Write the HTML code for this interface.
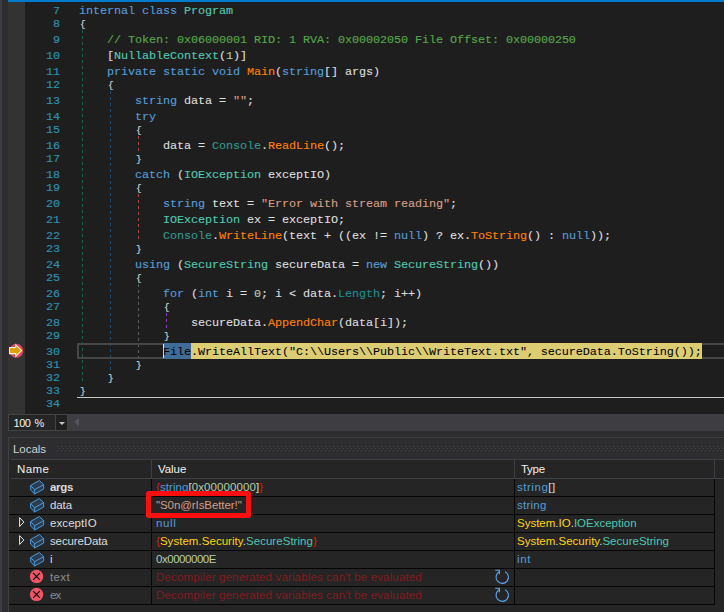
<!DOCTYPE html>
<html><head><meta charset="utf-8"><title>Locals</title>
<style>
html,body{margin:0;padding:0;background:#2d2d30;}
body{width:724px;height:612px;position:relative;overflow:hidden;font-family:"Liberation Sans",sans-serif;}
#strip{position:absolute;left:0;top:0;width:2px;height:612px;background:#3e3e42}
#ed{position:absolute;left:8px;top:0;width:716px;height:414px;background:#1e1e1e;overflow:hidden}
#topbar{position:absolute;left:8px;top:0;width:716px;height:2px;background:#007acc}
#gut{position:absolute;left:8px;top:2px;width:17px;height:412px;background:#333333}
.cl,.ln{position:absolute;height:16px;line-height:16px;font-family:"Liberation Mono",monospace;font-size:11.8px;letter-spacing:-0.0812px;white-space:pre;color:#dcdcdc}
.cl{left:79px;padding-top:1px;-webkit-text-stroke:0.14px}
.br{font-size:9.3px;position:relative;top:-0.3px;margin-left:0.9px;letter-spacing:0}
.ln{left:25px;width:35px;text-align:right;color:#2b91af;padding-top:1px;-webkit-text-stroke:0.18px}
.curbox{position:absolute;left:77px;width:649px;height:16px;box-sizing:border-box;border:2px solid #464646}
.hl{position:absolute;left:163px;width:539px;height:15.7px;background:#dccc72}
.sel{position:absolute;left:163px;width:28px;height:16px;background:#3f6c98}
.caret{position:absolute;left:163px;width:1px;height:14px;background:#e0e0e0}
.guide{position:absolute;width:1px}
#endline{position:absolute;left:77px;top:397px;width:647px;height:1px;background:#c8c8c8}
#hs{position:absolute;left:8px;top:414px;width:716px;height:17px;background:#3e3e42}
#zoom{position:absolute;left:8px;top:414px;width:48px;height:17px;box-sizing:border-box;border:1px solid #434346;background:#252526;color:#f1f1f1;font-size:11px;line-height:17px;padding-left:4.6px;letter-spacing:-0.5px;word-spacing:1.6px;white-space:pre}
#zbtn{position:absolute;left:55px;top:414px;width:13px;height:17px;box-sizing:border-box;border:1px solid #434346;background:#202021}
#zbtn:after{content:"";position:absolute;left:3px;top:7px;border:3px solid transparent;border-top:3px solid #c8c8c8;border-bottom:none}
#larrow{position:absolute;left:74px;top:418px;width:0;height:0;border:4.5px solid transparent;border-right:5px solid #56565a;border-left:none}
#panel{position:absolute;left:8px;top:437px;width:717px;height:180px;box-sizing:border-box;border:1px solid #3f3f46;background:#2d2d30}
#pbody{position:absolute;left:9px;top:459px;width:715px;height:153px;background:#252526}
#ptitle{position:absolute;left:13px;top:440.5px;font-size:11.5px;line-height:16px;color:#d0d0d0;letter-spacing:-0.04px}
#grip{position:absolute;left:57px;top:446px}
#hdr{position:absolute;left:11px;top:459px;width:713px;height:20px;box-sizing:border-box;border-top:1px solid #3f3f46;border-bottom:1px solid #3f3f46;background:#252526;color:#f1f1f1;font-size:11.5px;line-height:18px}
#hdr div{position:absolute;top:0;height:18px;padding-left:6px;border-left:1px solid #3f3f46;box-sizing:border-box;white-space:pre}
.row{position:absolute;left:9px;width:706px;height:18px;box-sizing:border-box;border-bottom:1px solid #050505;border-right:1px solid #050505;font-size:11.5px;line-height:16px;color:#dcdcdc;background:#252526}
.row .c1,.row .c2,.row .c3{position:absolute;top:0;height:17px;white-space:pre;overflow:hidden}
.row .c1{left:41px;width:100px}
.row .c2{left:142px;width:363px;border-left:1px solid #050505;padding-left:4px;box-sizing:border-box}
.row .c3{left:505px;width:200px;border-left:1px solid #050505;padding-left:2px;box-sizing:border-box}
.row .ico{position:absolute;left:20px;top:0px}
.row .exp{position:absolute;left:8.7px;top:0px}
.row .rf{position:absolute;left:485px;top:0px}
#red{position:absolute;left:146px;top:491px;width:105px;height:27px;box-sizing:border-box;border:5px solid #fe0e0e;border-radius:2.5px}
</style></head><body>
<div id="strip"></div>
<div id="ed"></div>
<div id="topbar"></div>
<div id="gut"></div>
<div id="endline"></div>
<div class="guide" style="left:82px;top:30px;height:354px;background:repeating-linear-gradient(to bottom,#186350 0,#186350 3px,transparent 3px,transparent 6px)"></div>
<div class="guide" style="left:110px;top:91px;height:280px;background:repeating-linear-gradient(to bottom,#1b4c73 0,#1b4c73 3px,transparent 3px,transparent 6px)"></div>
<div class="guide" style="left:138px;top:136px;height:16px;background:repeating-linear-gradient(to bottom,#a94b44 0,#a94b44 3px,transparent 3px,transparent 6px)"></div>
<div class="guide" style="left:138px;top:194px;height:48px;background:repeating-linear-gradient(to bottom,#a94b44 0,#a94b44 3px,transparent 3px,transparent 6px)"></div>
<div class="guide" style="left:138px;top:284px;height:74px;background:repeating-linear-gradient(to bottom,#5e5e5e 0,#5e5e5e 3px,transparent 3px,transparent 6px)"></div>
<div class="guide" style="left:166px;top:313px;height:16px;background:repeating-linear-gradient(to bottom,#8a3fc0 0,#8a3fc0 3px,transparent 3px,transparent 6px)"></div>
<div class="ln" style="top:2px">7</div>
<div class="cl" style="top:2px"><span style="color:#569cd6">internal</span> <span style="color:#569cd6">class</span> <span style="color:#4ec9b0">Program</span></div>
<div class="ln" style="top:15px">8</div>
<div class="cl" style="top:15px"><span class="br">{</span></div>
<div class="ln" style="top:31px">9</div>
<div class="cl" style="top:31px">    <span style="color:#57a64a">// Token: 0x06000001 RID: 1 RVA: 0x00002050 File Offset: 0x00000250</span></div>
<div class="ln" style="top:47px">10</div>
<div class="cl" style="top:47px">    [<span style="color:#4ec9b0">NullableContext</span>(<span style="color:#b5cea8">1</span>)]</div>
<div class="ln" style="top:63px">11</div>
<div class="cl" style="top:63px">    <span style="color:#569cd6">private</span> <span style="color:#569cd6">static</span> <span style="color:#569cd6">void</span> <span style="color:#ff8000">Main</span>(<span style="color:#569cd6">string</span>[] args)</div>
<div class="ln" style="top:76px">12</div>
<div class="cl" style="top:76px">    <span class="br">{</span></div>
<div class="ln" style="top:92px">13</div>
<div class="cl" style="top:92px">        <span style="color:#569cd6">string</span> data = <span style="color:#d69d85">&quot;&quot;</span>;</div>
<div class="ln" style="top:108px">14</div>
<div class="cl" style="top:108px">        <span style="color:#569cd6">try</span></div>
<div class="ln" style="top:121px">15</div>
<div class="cl" style="top:121px">        <span class="br">{</span></div>
<div class="ln" style="top:137px">16</div>
<div class="cl" style="top:137px">            data = <span style="color:#2f9a8a">Console</span>.<span style="color:#ff8000">ReadLine</span>();</div>
<div class="ln" style="top:150px">17</div>
<div class="cl" style="top:150px">        <span class="br">}</span></div>
<div class="ln" style="top:166px">18</div>
<div class="cl" style="top:166px">        <span style="color:#569cd6">catch</span> (<span style="color:#4ec9b0">IOException</span> exceptIO)</div>
<div class="ln" style="top:179px">19</div>
<div class="cl" style="top:179px">        <span class="br">{</span></div>
<div class="ln" style="top:195px">20</div>
<div class="cl" style="top:195px">            <span style="color:#569cd6">string</span> text = <span style="color:#d69d85">&quot;Error with stream reading&quot;</span>;</div>
<div class="ln" style="top:211px">21</div>
<div class="cl" style="top:211px">            <span style="color:#4ec9b0">IOException</span> ex = exceptIO;</div>
<div class="ln" style="top:227px">22</div>
<div class="cl" style="top:227px">            <span style="color:#2f9a8a">Console</span>.<span style="color:#ff8000">WriteLine</span>(text + ((ex != <span style="color:#569cd6">null</span>) ? ex.<span style="color:#ff8000">ToString</span>() : <span style="color:#569cd6">null</span>));</div>
<div class="ln" style="top:240px">23</div>
<div class="cl" style="top:240px">        <span class="br">}</span></div>
<div class="ln" style="top:256px">24</div>
<div class="cl" style="top:256px">        <span style="color:#569cd6">using</span> (<span style="color:#4ec9b0">SecureString</span> secureData = <span style="color:#569cd6">new</span> <span style="color:#4ec9b0">SecureString</span>())</div>
<div class="ln" style="top:269px">25</div>
<div class="cl" style="top:269px">        <span class="br">{</span></div>
<div class="ln" style="top:285px">26</div>
<div class="cl" style="top:285px">            <span style="color:#569cd6">for</span> (<span style="color:#569cd6">int</span> i = <span style="color:#b5cea8">0</span>; i &lt; data.<span style="color:#178f8f">Length</span>; i++)</div>
<div class="ln" style="top:298px">27</div>
<div class="cl" style="top:298px">            <span class="br">{</span></div>
<div class="ln" style="top:314px">28</div>
<div class="cl" style="top:314px">                secureData.<span style="color:#ff8000">AppendChar</span>(data[i]);</div>
<div class="ln" style="top:327px">29</div>
<div class="cl" style="top:327px">            <span class="br">}</span></div>
<div class="ln" style="top:343px">30</div>
<div class="curbox" style="top:343px"></div>
<div class="hl" style="top:343px"></div>
<div class="sel" style="top:343px"></div>
<div class="caret" style="top:344px"></div>
<div class="cl" style="top:343px;color:#000;-webkit-text-stroke:0.05px">            File.WriteAllText(&quot;C:\\Users\\Public\\WriteText.txt&quot;, secureData.ToString());</div>
<div class="ln" style="top:356px">31</div>
<div class="cl" style="top:356px">        <span class="br">}</span></div>
<div class="ln" style="top:369px">32</div>
<div class="cl" style="top:369px">    <span class="br">}</span></div>
<div class="ln" style="top:382px">33</div>
<div class="cl" style="top:382px"><span class="br">}</span></div>
<div class="ln" style="top:395px">34</div>
<svg style="position:absolute;left:8px;top:342px" width="17" height="17" viewBox="0 0 17 17"><circle cx="8.3" cy="8.85" r="7" fill="#e5475a"/><path d="M1.6 5.5 L7.7 5.5 L7.7 2.7 L13.6 8.55 L7.7 14.4 L7.7 11.6 L1.6 11.6 Z" fill="#dc9f00" stroke="#f4f1e8" stroke-width="1.1"/></svg>
<div id="hs"></div>
<div id="zoom">100 %</div><div id="zbtn"></div><div id="larrow"></div>
<div id="panel"></div><div id="pbody"></div>
<div id="ptitle">Locals</div>
<svg id="grip" width="667" height="5" shape-rendering="crispEdges"><defs><pattern id="gp" x="0" y="0" width="4" height="4" patternUnits="userSpaceOnUse"><rect x="0" y="0" width="1" height="1" fill="#46464a"/><rect x="2" y="2" width="1" height="1" fill="#46464a"/></pattern></defs><rect x="0" y="0" width="667" height="5" fill="url(#gp)"/></svg>
<div id="hdr"><div style="left:0;width:140px;border-left:none;padding-left:6px;letter-spacing:0.43px">Name</div><div style="left:140px;width:363px;letter-spacing:-0.07px">Value</div><div style="left:503px;width:200px;letter-spacing:-0.3px">Type</div><div style="left:703px;width:10px"></div></div>
<div class="row" style="top:479px"><svg class="ico" width="18" height="18" viewBox="0 0 18 18"><path d="M17.45 1.2 L21.98 5.5 L21.98 10.2 L12.5 15.3 L8.26 11.1 L8.26 6.3 Z" transform="translate(8.1 8.25) scale(0.95) translate(-15.1 -8.25)" fill="#2b3c4e" stroke="#4c9fe6" stroke-width="1" stroke-linejoin="round"/><path d="M8.26 6.3 L12.5 10.8 L21.98 5.5 M12.5 10.8 L12.5 15.3" transform="translate(8.1 8.25) scale(0.95) translate(-15.1 -8.25)" fill="none" stroke="#4c9fe6" stroke-width="1" stroke-linejoin="round"/></svg><div class="c1" style="letter-spacing:-0.32px"><b>args</b></div><div class="c2" style="letter-spacing:0.08px"><span style="color:#e51400">{</span><span style="color:#569cd6">string</span>[<span style="color:#b5cea8">0x00000000</span>]<span style="color:#e51400">}</span></div><div class="c3" style="letter-spacing:0.53px"><span style="color:#569cd6">string</span>[]</div></div>
<div class="row" style="top:497px"><svg class="ico" width="18" height="18" viewBox="0 0 18 18"><path d="M17.45 1.2 L21.98 5.5 L21.98 10.2 L12.5 15.3 L8.26 11.1 L8.26 6.3 Z" transform="translate(8.1 8.25) scale(0.95) translate(-15.1 -8.25)" fill="#2b3c4e" stroke="#4c9fe6" stroke-width="1" stroke-linejoin="round"/><path d="M8.26 6.3 L12.5 10.8 L21.98 5.5 M12.5 10.8 L12.5 15.3" transform="translate(8.1 8.25) scale(0.95) translate(-15.1 -8.25)" fill="none" stroke="#4c9fe6" stroke-width="1" stroke-linejoin="round"/></svg><div class="c1" style="letter-spacing:-0.11px">data</div><div class="c2" style="letter-spacing:-0.08px"><span style="color:#d69d85">&quot;S0n@rIsBetter!&quot;</span></div><div class="c3" style="letter-spacing:0.24px"><span style="color:#569cd6">string</span></div></div>
<div class="row" style="top:515px"><svg class="exp" width="8" height="14" viewBox="0 0 8 14"><path d="M1.6 2.6 L1.6 11.5 L5.9 7.1 Z" fill="none" stroke="#e8e8e8" stroke-width="1"/></svg><svg class="ico" width="18" height="18" viewBox="0 0 18 18"><path d="M17.45 1.2 L21.98 5.5 L21.98 10.2 L12.5 15.3 L8.26 11.1 L8.26 6.3 Z" transform="translate(8.1 8.25) scale(0.95) translate(-15.1 -8.25)" fill="#2b3c4e" stroke="#4c9fe6" stroke-width="1" stroke-linejoin="round"/><path d="M8.26 6.3 L12.5 10.8 L21.98 5.5 M12.5 10.8 L12.5 15.3" transform="translate(8.1 8.25) scale(0.95) translate(-15.1 -8.25)" fill="none" stroke="#4c9fe6" stroke-width="1" stroke-linejoin="round"/></svg><div class="c1" style="letter-spacing:0.08px">exceptIO</div><div class="c2" style="letter-spacing:0.6px"><span style="color:#569cd6">null</span></div><div class="c3" style="letter-spacing:0px"><span style="color:#ffd700">System</span>.<span style="color:#ffd700">IO</span>.<span style="color:#4ec9b0">IOException</span></div></div>
<div class="row" style="top:533px"><svg class="exp" width="8" height="14" viewBox="0 0 8 14"><path d="M1.6 2.6 L1.6 11.5 L5.9 7.1 Z" fill="none" stroke="#e8e8e8" stroke-width="1"/></svg><svg class="ico" width="18" height="18" viewBox="0 0 18 18"><path d="M17.45 1.2 L21.98 5.5 L21.98 10.2 L12.5 15.3 L8.26 11.1 L8.26 6.3 Z" transform="translate(8.1 8.25) scale(0.95) translate(-15.1 -8.25)" fill="#2b3c4e" stroke="#4c9fe6" stroke-width="1" stroke-linejoin="round"/><path d="M8.26 6.3 L12.5 10.8 L21.98 5.5 M12.5 10.8 L12.5 15.3" transform="translate(8.1 8.25) scale(0.95) translate(-15.1 -8.25)" fill="none" stroke="#4c9fe6" stroke-width="1" stroke-linejoin="round"/></svg><div class="c1" style="letter-spacing:-0.13px">secureData</div><div class="c2" style="letter-spacing:0.04px"><span style="color:#e51400">{</span><span style="color:#ffd700">System</span>.<span style="color:#ffd700">Security</span>.<span style="color:#4ec9b0">SecureString</span><span style="color:#e51400">}</span></div><div class="c3" style="letter-spacing:0px"><span style="color:#ffd700">System</span>.<span style="color:#ffd700">Security</span>.<span style="color:#4ec9b0">SecureString</span></div></div>
<div class="row" style="top:551px"><svg class="ico" width="18" height="18" viewBox="0 0 18 18"><path d="M17.45 1.2 L21.98 5.5 L21.98 10.2 L12.5 15.3 L8.26 11.1 L8.26 6.3 Z" transform="translate(8.1 8.25) scale(0.95) translate(-15.1 -8.25)" fill="#2b3c4e" stroke="#4c9fe6" stroke-width="1" stroke-linejoin="round"/><path d="M8.26 6.3 L12.5 10.8 L21.98 5.5 M12.5 10.8 L12.5 15.3" transform="translate(8.1 8.25) scale(0.95) translate(-15.1 -8.25)" fill="none" stroke="#4c9fe6" stroke-width="1" stroke-linejoin="round"/></svg><div class="c1" style="letter-spacing:0px">i</div><div class="c2" style="letter-spacing:-0.46px"><span style="color:#b5cea8">0x0000000E</span></div><div class="c3" style="letter-spacing:0.65px"><span style="color:#569cd6">int</span></div></div>
<div class="row" style="top:569px"><svg class="ico" width="18" height="18" viewBox="0 0 18 18"><circle cx="7.54" cy="7.4" r="6.7" fill="#f25568"/><path d="M4.1 4.0 L10.9 10.8 M10.9 4.0 L4.1 10.8" stroke="#0a0a0a" stroke-width="1.1" fill="none"/></svg><div class="c1" style="letter-spacing:0.36px"><span style="color:#8c8c8c">text</span></div><div class="c2" style="letter-spacing:0.15px"><span style="color:#801c20">Decompiler generated variables can&#x27;t be evaluated</span></div><div class="c3" style="letter-spacing:0px"></div><svg class="rf" width="18" height="18" viewBox="0 0 18 18"><path d="M11.1 2.7 A6.2 6.2 0 1 1 5.2 2.8" fill="none" stroke="#55aaf0" stroke-width="1.1"/><path d="M1.2 1.3 L5.4 1.3 L5.4 5.2" fill="none" stroke="#55aaf0" stroke-width="1.1"/></svg></div>
<div class="row" style="top:587px"><svg class="ico" width="18" height="18" viewBox="0 0 18 18"><circle cx="7.54" cy="7.4" r="6.7" fill="#f25568"/><path d="M4.1 4.0 L10.9 10.8 M10.9 4.0 L4.1 10.8" stroke="#0a0a0a" stroke-width="1.1" fill="none"/></svg><div class="c1" style="letter-spacing:-0.8px"><span style="color:#8c8c8c">ex</span></div><div class="c2" style="letter-spacing:0.15px"><span style="color:#801c20">Decompiler generated variables can&#x27;t be evaluated</span></div><div class="c3" style="letter-spacing:0px"></div><svg class="rf" width="18" height="18" viewBox="0 0 18 18"><path d="M11.1 2.7 A6.2 6.2 0 1 1 5.2 2.8" fill="none" stroke="#55aaf0" stroke-width="1.1"/><path d="M1.2 1.3 L5.4 1.3 L5.4 5.2" fill="none" stroke="#55aaf0" stroke-width="1.1"/></svg></div>
<div id="red"></div>
</body></html>
